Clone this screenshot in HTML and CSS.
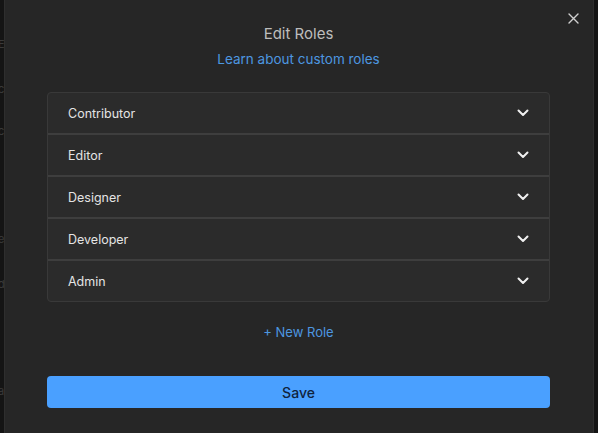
FILE: index.html
```html
<!DOCTYPE html>
<html>
<head>
<meta charset="utf-8">
<link rel="stylesheet" href="styles.css">
</head>
<body>
<div class="page">
  <div class="backdrop-left">
    <span class="ghost g1">E</span>
    <span class="ghost g2">c</span>
    <span class="ghost g3">c</span>
    <span class="ghost g4">e</span>
    <span class="ghost g5">d</span>
    <span class="ghost g6">a</span>
  </div>
  <div class="modal">
    <button class="close" aria-label="Close">
      <svg width="11" height="11" viewBox="0 0 11 11"><path d="M1 1L10 10M10 1L1 10" stroke="#d0d0d0" stroke-width="1.4" stroke-linecap="round"/></svg>
    </button>
    <h1 class="title">Edit Roles</h1>
    <a class="learn" href="#">Learn about custom roles</a>
    <ul class="roles">
      <li class="role"><span>Contributor</span><svg class="chev" width="12" height="8" viewBox="0 0 12 8"><path d="M1.5 1.5L6 6L10.5 1.5" fill="none" stroke="#f0f0f0" stroke-width="2" stroke-linecap="round" stroke-linejoin="round"/></svg></li>
      <li class="role"><span>Editor</span><svg class="chev" width="12" height="8" viewBox="0 0 12 8"><path d="M1.5 1.5L6 6L10.5 1.5" fill="none" stroke="#f0f0f0" stroke-width="2" stroke-linecap="round" stroke-linejoin="round"/></svg></li>
      <li class="role"><span>Designer</span><svg class="chev" width="12" height="8" viewBox="0 0 12 8"><path d="M1.5 1.5L6 6L10.5 1.5" fill="none" stroke="#f0f0f0" stroke-width="2" stroke-linecap="round" stroke-linejoin="round"/></svg></li>
      <li class="role"><span>Developer</span><svg class="chev" width="12" height="8" viewBox="0 0 12 8"><path d="M1.5 1.5L6 6L10.5 1.5" fill="none" stroke="#f0f0f0" stroke-width="2" stroke-linecap="round" stroke-linejoin="round"/></svg></li>
      <li class="role"><span>Admin</span><svg class="chev" width="12" height="8" viewBox="0 0 12 8"><path d="M1.5 1.5L6 6L10.5 1.5" fill="none" stroke="#f0f0f0" stroke-width="2" stroke-linecap="round" stroke-linejoin="round"/></svg></li>
    </ul>
    <a class="new-role" href="#">+ New Role</a>
    <button class="save">Save</button>
  </div>
  <div class="backdrop-right"></div>
</div>
</body>
</html>
```
FILE: styles.css
```css
* { box-sizing: border-box; }
html, body {
  margin: 0;
  padding: 0;
  width: 598px;
  height: 433px;
  overflow: hidden;
  background: #151515;
  font-family: Inter, "Noto Sans", sans-serif;
}
.page {
  display: flex;
  height: 433px;
}
.backdrop-left {
  width: 5px;
  background: #141414;
  border-right: 1px solid #2e2e2e;
  display: flex;
  flex-direction: column;
  overflow: hidden;
  font-size: 11px;
  color: #3a3a3a;
}
.ghost { display: block; line-height: 12px; margin-left: -2px; }
.g1 { margin-top: 38px; }
.g2 { margin-top: 33px; }
.g3 { margin-top: 30px; }
.g4 { margin-top: 96px; }
.g5 { margin-top: 33px; }
.g6 { margin-top: 95px; }
.backdrop-right {
  width: 5px;
  background: #141414;
  border-left: 1px solid #2e2e2e;
}
.modal {
  position: relative;
  flex: 1;
  background: #262626;
  display: flex;
  flex-direction: column;
  align-items: stretch;
  padding: 24px 43px 0 42px;
}
.close {
  position: absolute;
  top: 11px;
  right: 12px;
  width: 15px;
  height: 15px;
  padding: 0;
  border: 0;
  background: transparent;
  display: flex;
  align-items: center;
  justify-content: center;
}
.title {
  margin: 0;
  font-size: 15px;
  line-height: 20px;
  font-weight: 400;
  color: #bdbdbd;
  text-align: center;
}
.learn {
  margin-top: 5px;
  font-size: 13.5px;
  line-height: 20px;
  color: #4d97e0;
  text-decoration: none;
  text-align: center;
}
.roles {
  list-style: none;
  margin: 23px 0 0;
  padding: 0;
  border: 1px solid #393939;
  border-radius: 4px;
  background: #2b2b2b;
  overflow: hidden;
}
.role {
  height: 40px;
  display: flex;
  align-items: center;
  justify-content: space-between;
  padding: 0 20px 0 20px;
  font-size: 12.5px;
  color: #e4e4e4;
}
.role + .role {
  border-top: 2px solid #3e3e3e;
  height: 42px;
}
.new-role {
  margin-top: 20px;
  font-size: 13px;
  line-height: 20px;
  color: #4d97e0;
  text-decoration: none;
  text-align: center;
}
.save {
  margin-top: 34px;
  height: 32px;
  border: 0;
  border-radius: 4px;
  background: #4aa0ff;
  color: #10233d;
  font-family: Inter, "Noto Sans", sans-serif;
  font-size: 14px;
  font-weight: 500;
}
```
